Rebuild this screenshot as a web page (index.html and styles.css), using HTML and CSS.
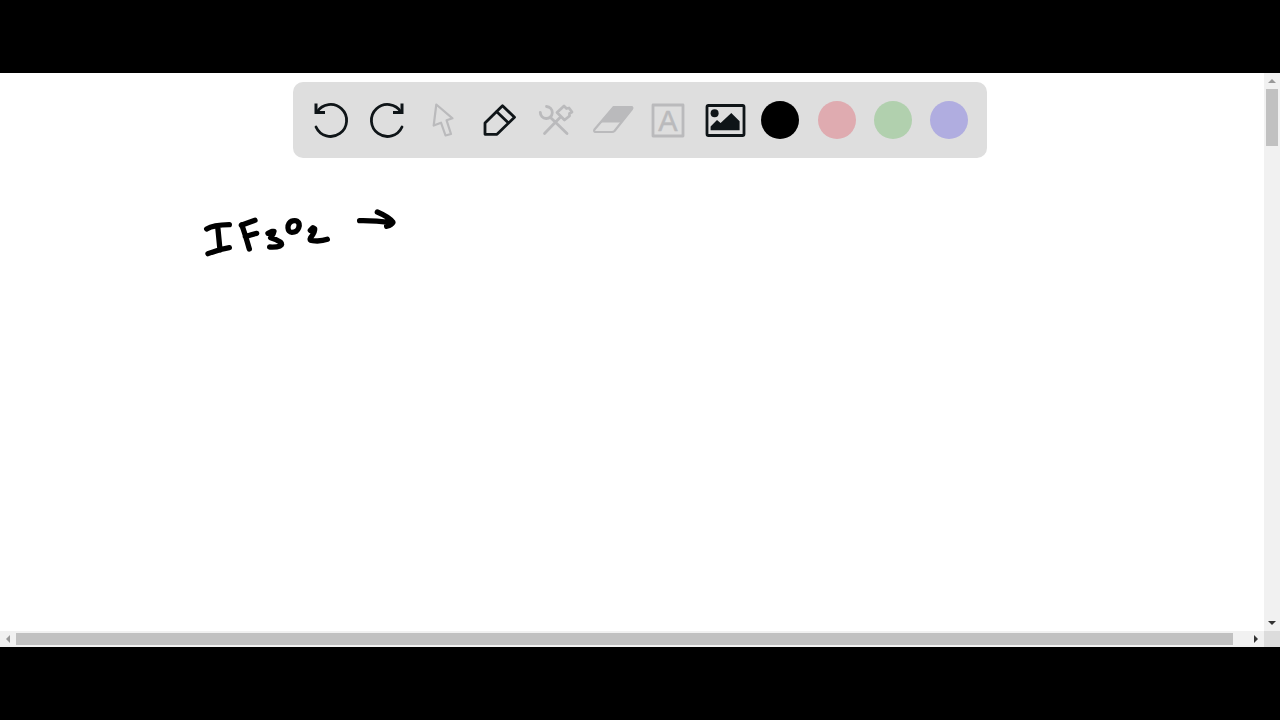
FILE: index.html
```
<!DOCTYPE html>
<html lang="en">

<head>
     <meta charset="UTF-8">
     <meta name="viewport" content="width=device-width, initial-scale=1.0">
     <title>Whiteboard</title>
     <link rel="stylesheet" href="styles.css">
</head>

<body>
     <main class="board">
          <svg class="ink" role="img" aria-label="IF3O2 →">
               <g transform="translate(195 127) scale(0.3333)">
                    <!-- I -->
                    <path d="M35 87Q55 75 103 74M68 78L75 150M39 161Q70 148 103 143" />
                    <!-- F -->
                    <path d="M140 74Q148 95 163 147M139 76Q155 70 180 61M151 110Q170 103 185 100" />
                    <!-- 3 -->
                    <path d="M219 100L231 94L237 94Q236 103 227 113Q243 118 257 127Q264 133 255 138Q245 142 224 141" />
                    <!-- O -->
                    <path d="M291 63C273 72 277 98 291 97C312 97 318 72 307 64Q299 59 287 65" />
                    <!-- 2 -->
                    <path d="M346 91L354 83L359 86Q361 95 347 113Q342 122 352 122Q378 125 397 118" />
                    <!-- arrow -->
                    <path d="M494 62Q535 61 592 68M547 36Q584 52 594 67Q590 74 575 79" />
               </g>
          </svg>

          <div class="toolbar">
               <button class="tool" aria-label="Undo">
                    <svg viewBox="0 0 40 40">
                         <path class="head" d="M5 3.5V12.500H14" />
                         <path d="M6 12A16 16 0 1 1 5 27" />
                    </svg>
               </button>
               <button class="tool" aria-label="Redo">
                    <svg viewBox="0 0 40 40">
                         <path class="head" d="M35 3.5V12.500H26" />
                         <path d="M34 12A16 16 0 1 0 35 27" />
                    </svg>
               </button>
               <button class="tool muted" aria-label="Select">
                    <svg viewBox="0 0 40 40">
                         <path class="thin" d="M13.300 4.500L29.500 18.300L23.600 20.300L28 34L22.500 35.500L18 22.700L10.700 25.500Z" />
                    </svg>
               </button>
               <button class="tool" aria-label="Pen">
                    <svg viewBox="0 0 40 40">
                         <path d="M5 23L22.500 5.700L34.500 17.300L17 34.300H5ZM16.500 11.500L28.500 23" />
                    </svg>
               </button>
               <button class="tool muted" aria-label="Tools">
                    <svg viewBox="0 0 40 40">
                         <path d="M4.300 12.300A6 6 0 1 0 10.500 6.500M14 17L31 33.500M8.500 33.500L24.500 17" />
                         <path d="M21 12.500L28 6L30.500 8.500L33 8L36 12L33.500 13.500V16L28.500 20Z" />
                    </svg>
               </button>
               <button class="tool muted" aria-label="Eraser">
                    <svg viewBox="0 0 40 40">
                         <path class="solid" d="M21.700 6H40L41 8.500L29 22.500H8.500Z" />
                         <path class="thin" d="M21.700 7H39.500Q41 7.500 40 9L22.500 31Q21.500 32 20 32H3Q1.500 31.500 2.500 29.500Z" />
                    </svg>
               </button>
               <button class="tool muted" aria-label="Text">
                    <svg viewBox="0 0 40 40">
                         <rect x="5" y="5" width="30" height="31" />
                         <text x="20" y="31" text-anchor="middle">A</text>
                    </svg>
               </button>
               <button class="tool" aria-label="Image">
                    <svg viewBox="0 0 40 40">
                         <rect x="3" y="5.500" width="37" height="30" rx="1.500" />
                         <circle class="solid" cx="10.600" cy="13.300" r="4" />
                         <path class="solid" d="M6.600 30.300V26.500L13 20L16.600 23L27.300 13L35.600 21.300V30.300Z" />
                    </svg>
               </button>
               <input class="color black" type="radio" name="color" aria-label="Black" checked>
               <input class="color red" type="radio" name="color" aria-label="Red">
               <input class="color green" type="radio" name="color" aria-label="Green">
               <input class="color blue" type="radio" name="color" aria-label="Blue">
          </div>

          <div class="scroll vertical">
               <button class="step off" aria-label="Scroll up"><svg viewBox="0 0 16 16"><path d="M4 10L8 6L12 10Z" /></svg></button>
               <div class="track"><div class="thumb"></div></div>
               <button class="step" aria-label="Scroll down"><svg viewBox="0 0 16 16"><path d="M4 6L8 10L12 6Z" /></svg></button>
          </div>
          <div class="scroll horizontal">
               <button class="step off" aria-label="Scroll left"><svg viewBox="0 0 16 16"><path d="M10 4L6 8L10 12Z" /></svg></button>
               <div class="track"><div class="thumb"></div></div>
               <button class="step" aria-label="Scroll right"><svg viewBox="0 0 16 16"><path d="M6 4L10 8L6 12Z" /></svg></button>
          </div>
          <div class="corner"></div>
     </main>
</body>

</html>
```
FILE: styles.css
```
* {
     padding: 0;
     margin: 0;
     box-sizing: border-box;
     font-family: "Liberation Sans", Arial, sans-serif;
}

body {
     height: 100vh;
     padding: 73px 0;
     background: black;
}

.board {
     height: 100%;
     display: grid;
     grid-template-columns: 1fr 16px;
     grid-template-rows: 1fr 16px;
     background: white;
}

.ink {
     grid-area: 1 / 1;
     width: 100%;
     height: 100%;
     fill: none;
     stroke: black;
     stroke-width: 16;
     stroke-linecap: round;
     stroke-linejoin: round;
}

.toolbar {
     grid-area: 1 / 1 / 2 / 3;
     justify-self: center;
     align-self: start;
     display: grid;
     grid-template-columns: repeat(12, 1fr);
     place-items: center;
     width: 694px;
     max-width: 100%;
     margin-top: 9px;
     padding: 18px 10px;
     border-radius: 10px;
     background: #dedede;
}

.tool {
     border: none;
     background: transparent;
     color: #0f1518;
     cursor: pointer;
}

.tool svg {
     display: block;
     width: 40px;
     height: 40px;
     overflow: visible;
     fill: none;
     stroke: currentColor;
     stroke-width: 2.8;
     stroke-linejoin: round;
     stroke-linecap: round;
}

.tool.muted {
     color: #bababc;
}

.tool .solid {
     fill: currentColor;
     stroke: none;
}

.tool .thin {
     stroke-width: 2.2;
}

.tool .head {
     stroke-width: 3;
     stroke-linejoin: miter;
     stroke-linecap: butt;
}

.tool text {
     font-size: 29px;
     fill: currentColor;
     stroke-width: 0.5;
}

.color {
     appearance: none;
     width: 38px;
     height: 38px;
     border-radius: 50%;
     cursor: pointer;
}

.black {
     background: black;
}

.red {
     background: #dfabb0;
}

.green {
     background: #b1d0ae;
}

.blue {
     background: #b0ade0;
}

.scroll {
     display: flex;
     background: #f1f1f1;
}

.vertical {
     grid-area: 1 / 2;
     flex-direction: column;
}

.horizontal {
     grid-area: 2 / 1;
}

.step {
     width: 16px;
     height: 16px;
     border: none;
     background: transparent;
     color: #333;
}

.step.off {
     color: #999;
}

.step svg {
     display: block;
     fill: currentColor;
}

.track {
     flex: 1;
}

.thumb {
     background: #c1c1c1;
}

.vertical .thumb {
     width: 12px;
     height: 57px;
     margin: 0 auto;
}

.horizontal .thumb {
     height: 12px;
     margin: 2px 15px 2px 0;
}

.corner {
     background: #dcdcdc;
}
```
